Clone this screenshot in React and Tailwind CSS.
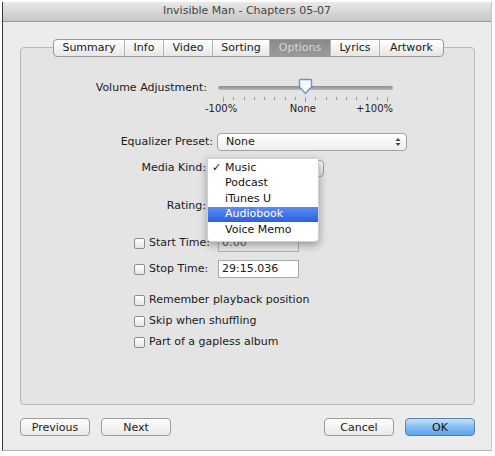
import React from 'react';

const tabs = ['Summary', 'Info', 'Video', 'Sorting', 'Options', 'Lyrics', 'Artwork'];
const tabWidths = [70, 39, 49, 57, 61, 49, 64];
const kinds = ['Music', 'Podcast', 'iTunes U', 'Audiobook', 'Voice Memo'];

const Checkbox = () => (
    <span className="inline-block w-[11px] h-[11px] rounded-[2px] border border-[#8c8c8c] bg-gradient-to-b from-white to-[#e6e6e6] shrink-0" />
);

const Button = ({ children, primary }) => (
    <button
        className={
            primary
                ? 'w-[70px] h-[18px] rounded-[4px] border border-[#5b7fae] bg-gradient-to-b from-[#c6e0fa] via-[#86bdf2] to-[#5ea6ec] text-[11px] text-[#111] leading-none'
                : 'w-[70px] h-[18px] rounded-[4px] border border-[#9c9c9c] bg-gradient-to-b from-white to-[#e9e9e9] text-[11px] text-[#222] leading-none'
        }
    >
        {children}
    </button>
);

const VolumeSlider = () => {
    const ticks = Array.from({ length: 17 }, (_, i) => i);
    return (
        <div className="w-[175px]">
            <div className="relative h-[18px] flex items-center">
                <div className="w-full h-[4px] rounded-full bg-gradient-to-b from-[#8e8e8e] to-[#b8b8b8]" />
                {/* thumb */}
                <svg className="absolute left-[80px] top-[-1px]" width="15" height="17" viewBox="0 0 15 17">
                    <path d="M2.5 1.5 H12.5 Q13.5 1.5 13.5 2.5 V9 L7.5 15.5 L1.5 9 V2.5 Q1.5 1.5 2.5 1.5 Z" fill="#f7f9fc" stroke="#6d93c8" strokeWidth="1.4" />
                </svg>
            </div>
            <div className="flex justify-between px-[5px] h-[5px] items-start">
                {ticks.map((i) => (
                    <span key={i} className={`w-px bg-[#9a9a9a] ${i === 0 || i === 8 || i === 16 ? 'h-[5px]' : 'h-[3px]'}`} />
                ))}
            </div>
            <div className="flex text-[10px] text-[#222] leading-none mt-[2px] -ml-[13px]">
                <span className="w-[60px]">-100%</span>
                <span className="w-[80px] text-center">None</span>
                <span className="w-[52px] text-right">+100%</span>
            </div>
        </div>
    );
};

const CheckRow = ({ label }) => (
    <div className="w-[197px] pl-[113px] flex items-center gap-[4px]">
        <Checkbox />
        <span>{label}</span>
    </div>
);

export default function App() {
    return (
        <div className="w-[495px] h-[456px] bg-white pt-[2px] pl-[2px] font-['DejaVu_Sans',sans-serif] text-[#1a1a1a] select-none">
            <div className="w-[490px] h-[449px] flex flex-col border-l border-l-[#3a3a3a] border-r border-r-[#c8c8c8] border-b border-b-[#b0b0b0] bg-[#ececec]">
                {/* title bar */}
                <div className="h-[20px] shrink-0 flex items-center justify-center bg-gradient-to-b from-[#e9e9e9] to-[#c6c6c6] border-b border-[#9a9a9a] text-[11px] text-[#444]">
                    Invisible Man - Chapters 05-07
                </div>

                <div className="flex flex-col pt-[17px]">
                    {/* tab strip */}
                    <div className="relative z-10 flex ml-[50px] w-[391px] h-[18px] rounded-[4px] border border-[#9a9a9a] bg-gradient-to-b from-white to-[#e6e6e6] overflow-hidden text-[11px]">
                        {tabs.map((t, i) => (
                            <div
                                key={t}
                                className={`flex-auto flex items-center justify-center ${i > 0 ? 'border-l border-[#b4b4b4]' : ''} ${t === 'Options' ? 'bg-gradient-to-b from-[#8a8a8a] to-[#9a9a9a] text-[#d6d6d6]' : 'text-[#1a1a1a]'}`}
                                style={{ width: tabWidths[i] }}
                            >
                                {t}
                            </div>
                        ))}
                    </div>

                    {/* options panel */}
                    <div className="relative -mt-[10px] ml-[17px] w-[455px] h-[358px] rounded-[4px] border border-[#b8b8b8] bg-[#e4e4e4] text-[11px]">
                        <div className="flex flex-col pt-[31px]">
                            <div className="flex items-start">
                                <div className="w-[197px] pr-[11px] h-[18px] flex items-center justify-end">Volume Adjustment:</div>
                                <VolumeSlider />
                            </div>

                            <div className="flex items-center mt-[19px] h-[18px]">
                                <div className="w-[196px] text-right pr-[4px]">Equalizer Preset:</div>
                                <div className="w-[190px] h-[18px] rounded-[4px] border border-[#a2a2a2] bg-gradient-to-b from-white to-[#ededed] flex items-center justify-between pl-[8px] pr-[5px]">
                                    <span>None</span>
                                    <svg width="6" height="10" viewBox="0 0 6 10">
                                        <path d="M3 1 L5.5 4 H0.5 Z M3 9 L5.5 6 H0.5 Z" fill="#444" />
                                    </svg>
                                </div>
                            </div>

                            <div className="flex items-center mt-[8px] h-[18px]">
                                <div className="w-[196px] text-right pr-[11px]">Media Kind:</div>
                                <div className="w-[107px] h-[17px] rounded-[4px] border border-[#a2a2a2] bg-gradient-to-b from-white to-[#e0e0e0]" />
                            </div>

                            <div className="flex items-center mt-[20px] h-[18px]">
                                <div className="w-[196px] text-right pr-[11px]">Rating:</div>
                            </div>

                            <div className="flex items-center mt-[19px] h-[18px]">
                                <CheckRow label="Start Time:" />
                                <div className="w-[81px] h-[18px] border border-[#b0b0b0] bg-[#e8e8e8] flex items-center px-[3px] text-[#555]">0:00</div>
                            </div>

                            <div className="flex items-center mt-[8px] h-[18px]">
                                <CheckRow label="Stop Time:" />
                                <div className="w-[81px] h-[18px] border border-[#a8a8a8] bg-white flex items-center px-[3px]">29:15.036</div>
                            </div>

                            <div className="flex flex-col gap-[3px] mt-[13px] pl-[113px]">
                                {['Remember playback position', 'Skip when shuffling', 'Part of a gapless album'].map((l) => (
                                    <div key={l} className="flex items-center gap-[4px] h-[18px]">
                                        <Checkbox />
                                        <span>{l}</span>
                                    </div>
                                ))}
                            </div>
                        </div>

                        {/* open media kind menu */}
                        <div className="absolute left-[186px] top-[110px] w-[112px] pt-[1px] pb-[3px] bg-white rounded-b-[4px] shadow-[0_3px_8px_rgba(0,0,0,0.35)] border border-[#d0d0d0]">
                            {kinds.map((k, i) => (
                                <div
                                    key={k}
                                    className={`h-[15.5px] flex items-center ${k === 'Audiobook' ? 'bg-gradient-to-b from-[#5d8cf0] to-[#2a5fe0] text-white' : 'text-[#111]'}`}
                                >
                                    <span className="w-[17px] text-center">{i === 0 ? '✓' : ''}</span>
                                    <span>{k}</span>
                                </div>
                            ))}
                        </div>
                    </div>

                    {/* footer buttons */}
                    <div className="flex items-center ml-[17px] w-[455px] mt-[13px]">
                        <Button>Previous</Button>
                        <div className="ml-[11px] flex"><Button>Next</Button></div>
                        <div className="ml-auto flex"><Button>Cancel</Button></div>
                        <div className="ml-[11px] flex"><Button primary>OK</Button></div>
                    </div>
                </div>
            </div>
        </div>
    );
}
